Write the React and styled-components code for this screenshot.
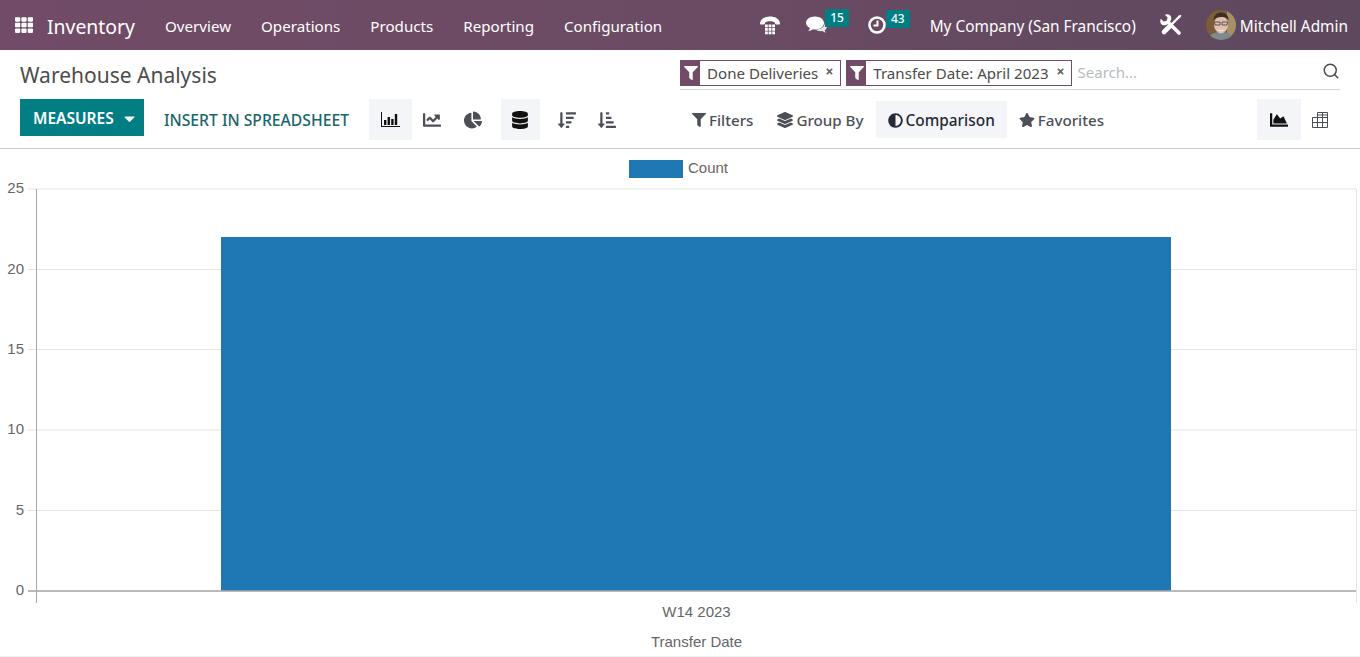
import React from "react";
import styled, { createGlobalStyle } from "styled-components";
import {
  FaAdjust,
  FaCaretDown,
  FaChartArea,
  FaChartLine,
  FaChartPie,
  FaDatabase,
  FaFilter,
  FaLayerGroup,
  FaSortAmountDown,
  FaSortAmountDownAlt,
  FaStar,
  FaTh,
  FaTimes,
} from "react-icons/fa";
import { Search } from "lucide-react";

const GlobalStyle = createGlobalStyle`
  html, body {
    margin: 0;
    height: 100%;
    overflow: hidden;
    background: #fff;
  }
  body {
    font-family: "Noto Sans", "Open Sans", sans-serif;
    color: #4c4c4c;
  }
`;

const Page = styled.div`
  width: 1360px;
  height: 657px;
  display: flex;
  flex-direction: column;
  overflow: hidden;
`;

const NavBar = styled.header`
  height: 50px;
  flex: none;
  display: flex;
  align-items: center;
  justify-content: space-between;
  color: #fff;
  background: linear-gradient(90deg, #714b67 0%, #6b4b64 50%, #5e485e 100%);
`;

const NavGroup = styled.nav`
  display: flex;
  align-items: center;
`;

const AppsButton = styled.span`
  display: flex;
  font-size: 18px;
  margin-left: 15px;
  margin-right: 14px;
`;

const Brand = styled.span`
  font-size: 19.4px;
  margin-right: 15px;
  margin-top: 2px;
  width: 88px;
`;

const MenuItem = styled.span`
  font-size: 15.15px;
  padding: 2px 15px 0;
  white-space: nowrap;
`;

const SystrayIcon = styled.span`
  display: flex;
  align-items: center;
  margin-right: ${(p) => p.$gap || 0}px;
`;

const BadgeGroup = styled.span`
  display: flex;
  align-items: flex-start;
  margin-right: ${(p) => p.$gap}px;
`;

const Badge = styled.span`
  background: #017e84;
  font-size: 12px;
  font-weight: 500;
  line-height: 18px;
  height: 18px;
  padding: 0 5px;
  margin-top: -6px;
  margin-left: ${(p) => p.$offset}px;
`;

const CompanyName = styled.span`
  font-size: 15.4px;
  margin-top: 2px;
  margin-right: 24px;
  white-space: nowrap;
`;

const UserName = styled.span`
  font-size: 15.4px;
  margin-top: 2px;
  margin-left: 4px;
  margin-right: 12px;
  white-space: nowrap;
`;

const ControlPanel = styled.section`
  height: 98px;
  flex: none;
  display: grid;
  grid-template-columns: 680px 680px;
  grid-template-rows: 49px 49px;
  border-bottom: 1px solid #ccc;
`;

const Title = styled.h1`
  margin: 0;
  padding: 11px 0 0 20px;
  font-size: 21px;
  line-height: 28px;
  font-weight: 400;
  color: #4c4c4c;
`;

const SearchBar = styled.div`
  width: 660px;
  height: 40px;
  display: flex;
  align-items: center;
  gap: 5px;
  padding-top: 7px;
  box-sizing: border-box;
  border-bottom: 1px solid #d5d5d5;
`;

const Facet = styled.div`
  display: flex;
  align-items: stretch;
  height: 26px;
  box-sizing: border-box;
  border: 1px solid #714b67;
  font-size: 15.1px;
  line-height: 25px;
  color: #4c4c4c;
`;

const FacetIcon = styled.span`
  width: 19px;
  background: #714b67;
  color: #fff;
  display: flex;
  align-items: center;
  justify-content: center;
  font-size: 14px;
`;

const FacetLabel = styled.span`
  padding-left: 7px;
  white-space: nowrap;
`;

const FacetRemove = styled.span`
  display: flex;
  padding: 6px 6px 0 7px;
  font-size: 9px;
  color: #666;
`;

const SearchInput = styled.span`
  flex: 1;
  padding-left: 1px;
  margin-top: -2px;
  font-size: 15px;
  color: #b8bcc0;
`;

const SearchIcon = styled.span`
  display: flex;
  color: #4c4c4c;
  margin-top: -5px;
`;

const ActionRow = styled.div`
  display: flex;
  align-items: flex-start;
  padding-left: ${(p) => p.$inset || 0}px;
`;

const PrimaryButton = styled.button`
  width: 124px;
  height: 37px;
  border: 0;
  padding: 1px 0 0 13px;
  background: #017e84;
  color: #fff;
  font-family: inherit;
  font-size: 15.5px;
  font-weight: 600;
  display: flex;
  align-items: center;
  justify-content: flex-start;
  gap: 7px;
  margin-right: 20px;
  svg {
    font-size: 17px;
  }
`;

const LinkButton = styled.span`
  font-size: 15.7px;
  font-weight: 500;
  line-height: 43px;
  color: #1b666b;
  margin-right: 20px;
  white-space: nowrap;
`;

const IconButton = styled.span`
  width: ${(p) => p.$width}px;
  height: 41px;
  margin-left: ${(p) => p.$gap || 0}px;
  display: flex;
  align-items: center;
  justify-content: center;
  font-size: ${(p) => p.$size || 18}px;
  background: ${(p) => (p.$active ? "#f4f5f9" : "transparent")};
  color: ${(p) => (p.$active ? "#111" : "#4c4f57")};
`;

const MenuButton = styled.span`
  height: 37px;
  box-sizing: border-box;
  margin-top: 2px;
  display: flex;
  align-items: center;
  gap: 3px;
  padding: 1px 12px 0;
  font-size: ${(p) => (p.$active ? 15.4 : 15.15)}px;
  font-weight: 500;
  white-space: nowrap;
  color: #4c4f57;
  background: ${(p) => (p.$active ? "#f4f5f9" : "transparent")};
  ${(p) => p.$active && "color: #262a36;"}
`;

const MenuGlyph = styled.span`
  display: flex;
  font-size: ${(p) => p.$size || 14}px;
`;

const ViewSwitcher = styled.div`
  display: flex;
  margin-left: auto;
  margin-right: 21px;
`;

const ChartArea = styled.main`
  flex: 1;
  min-height: 0;
  padding-top: 1px;
  border-bottom: 1px solid #f0f0f4;
  svg {
    display: block;
  }
`;

const ChartLabel = styled.text`
  font-family: "Liberation Sans", Arial, sans-serif;
  font-size: 15px;
  fill: #666;
`;

const TICKS = [
  { label: "25", y: 39 },
  { label: "20", y: 119.5 },
  { label: "15", y: 199.5 },
  { label: "10", y: 280 },
  { label: "5", y: 360.5 },
  { label: "0", y: 441 },
];

const BarChartIcon = () => (
  <svg width="19" height="15" viewBox="0 0 19 15" fill="#111">
    <path d="M0 0h1v14h18v1H0z" />
    <rect x="3" y="8" width="2.4" height="5" />
    <rect x="6.6" y="5" width="2.4" height="8" />
    <rect x="10.2" y="7" width="2.4" height="6" />
    <rect x="13.8" y="2" width="2.4" height="11" />
  </svg>
);

const PhoneIcon = () => (
  <svg width="20" height="20" viewBox="0 0 20 20" fill="#fff">
    <path d="M0 8C1 3.500 5 1.500 10 1.500S19 3.500 20 8c0 1-.4 1.500-1.200 1.500h-2.600c-.8 0-1.200-.5-1.200-1.200V7.500c-1.500-1-3-1.300-5-1.300s-3.500.3-5 1.300v.8c0 .7-.4 1.200-1.200 1.200H1.200C.4 9.500 0 9 0 8z" />
    {[5, 8.600, 12.200].map((x) =>
      [9.500, 13, 16.500].map((y) => (
        <rect key={`${x}-${y}`} x={x} y={y} width="2.800" height="2.800" />
      ))
    )}
  </svg>
);

const ChatIcon = () => (
  <svg width="21" height="20" viewBox="0 0 21 20" fill="#fff">
    <path d="M9 1.500c5 0 9 2.800 9 6.500s-4 6.500-9 6.500c-.8 0-1.600-.1-2.300-.2-1.200 1-2.600 1.600-4.400 1.800.8-.9 1.400-1.900 1.600-3C1.500 11.900 0 10 0 8c0-3.700 4-6.500 9-6.500z" />
    <path d="M18.800 7.500c1.400 1 2.200 2.400 2.200 3.900 0 1.500-.9 2.900-2.300 3.800.2.900.7 1.800 1.300 2.500-1.500-.2-2.700-.7-3.700-1.600-2.500.3-5.300-.3-7-1.600 4.500.3 9.800-2.200 9.500-7z" opacity=".85" />
  </svg>
);

const ClockIcon = () => (
  <svg width="18" height="18" viewBox="0 0 18 18" fill="none" stroke="#fff">
    <circle cx="9" cy="9" r="7.500" strokeWidth="2.600" />
    <path d="M9.500 4.500v5H5.500" strokeWidth="2" />
  </svg>
);

const ToolsIcon = () => (
  <svg width="22" height="22" viewBox="0 0 22 22" fill="#fff" stroke="#fff">
    <path d="M.8 4.800 3.600 7.600 6.800 6.800 7.600 3.600 4.800.8C7-.2 9.300.3 10.400 1.700 11.400 3 11.600 4.600 11 6L8.500 9.700 6 11C4.500 11.600 3 11.400 1.700 10.400.3 9.300-.2 7 .8 4.800z" stroke="none" />
    <path d="M8 8l11 11" strokeWidth="3.600" strokeLinecap="round" fill="none" />
    <path d="M19.600 2.400 11 11" strokeWidth="2.200" fill="none" />
    <path d="M20.400 .8 21.400 1.800 19.800 4.200 17.900 2.300z" stroke="none" />
    <path d="M10 12 4 18" strokeWidth="4.600" strokeLinecap="round" fill="none" />
  </svg>
);

const GridIcon = () => (
  <svg width="16" height="16" viewBox="0 0 16 16" fill="none" stroke="#4c4f57" strokeWidth="1">
    <path d="M5.500 5.500V.500h10v15H.500v-10h15M.5 10.500h15M5.500 5.500v10M10.500 .5v15M5.500 3h10" />
  </svg>
);

const Avatar = () => (
  <svg width="30" height="30" viewBox="0 0 30 30">
    <defs>
      <clipPath id="avatar-clip">
        <circle cx="15" cy="15" r="15" />
      </clipPath>
      <filter id="avatar-soft">
        <feGaussianBlur stdDeviation=".5" />
      </filter>
    </defs>
    <g clipPath="url(#avatar-clip)">
      <rect width="30" height="30" fill="#7d5c38" />
      <rect x="21" width="9" height="30" fill="#a88f68" />
      <g filter="url(#avatar-soft)">
        <path d="M3 30c0-6 5-8 12-8s12 2 12 8z" fill="#7f8a90" />
        <ellipse cx="15" cy="14.500" rx="7" ry="9" fill="#e0bfae" />
        <path d="M7.500 11c0-6 4-8.500 8-8.500s7.500 3 7 8.500c-1-3-3-4-7-4s-6.500 1-8 4z" fill="#3c2f28" />
        <path d="M8.500 12h5.500v3H9zM16 12h5.500l-.5 3h-5z" fill="none" stroke="#3a3a3a" strokeWidth=".8" />
        <path d="M11 19c2 2 6 2 8 0-1 3-7 3-8 0z" fill="#fff" />
      </g>
    </g>
  </svg>
);

const Chart = () => (
  <svg width="1360" height="506" viewBox="0 0 1360 506">
    <rect x="629" y="10" width="54" height="18" fill="#1f77b4" />
    <ChartLabel x="688" y="23">Count</ChartLabel>
    {TICKS.map((t) => (
      <g key={t.label}>
        <line x1="28" x2="1356" y1={t.y} y2={t.y} stroke="#e4e4e4" />
        <ChartLabel x="24" y={t.y + 4} textAnchor="end">{t.label}</ChartLabel>
      </g>
    ))}
    <line x1="1356.500" x2="1356.500" y1="39" y2="453" stroke="#e4e4e4" />
    <rect x="221" y="87" width="950" height="354" fill="#1f77b4" />
    <line x1="36.500" x2="36.500" y1="39" y2="453" stroke="#a8a8a8" />
    <line x1="28" x2="1356" y1="441" y2="441" stroke="#a8a8a8" strokeWidth="1.500" />
    <ChartLabel x="696.500" y="467" textAnchor="middle">W14 2023</ChartLabel>
    <ChartLabel x="696.500" y="497" textAnchor="middle">Transfer Date</ChartLabel>
  </svg>
);

export default function App() {
  return (
    <Page>
      <GlobalStyle />
      <NavBar>
        <NavGroup>
          <AppsButton><FaTh /></AppsButton>
          <Brand>Inventory</Brand>
          <MenuItem>Overview</MenuItem>
          <MenuItem>Operations</MenuItem>
          <MenuItem>Products</MenuItem>
          <MenuItem>Reporting</MenuItem>
          <MenuItem>Configuration</MenuItem>
        </NavGroup>
        <NavGroup>
          <SystrayIcon $gap={26}><PhoneIcon /></SystrayIcon>
          <BadgeGroup $gap={19}>
            <SystrayIcon><ChatIcon /></SystrayIcon>
            <Badge $offset={-2}>15</Badge>
          </BadgeGroup>
          <BadgeGroup $gap={20}>
            <SystrayIcon><ClockIcon /></SystrayIcon>
            <Badge $offset={0}>43</Badge>
          </BadgeGroup>
          <CompanyName>My Company (San Francisco)</CompanyName>
          <SystrayIcon $gap={24}><ToolsIcon /></SystrayIcon>
          <Avatar />
          <UserName>Mitchell Admin</UserName>
        </NavGroup>
      </NavBar>
      <ControlPanel>
        <Title>Warehouse Analysis</Title>
        <SearchBar>
          <Facet>
            <FacetIcon><FaFilter /></FacetIcon>
            <FacetLabel>Done Deliveries</FacetLabel>
            <FacetRemove><FaTimes /></FacetRemove>
          </Facet>
          <Facet>
            <FacetIcon><FaFilter /></FacetIcon>
            <FacetLabel>Transfer Date: April 2023</FacetLabel>
            <FacetRemove><FaTimes /></FacetRemove>
          </Facet>
          <SearchInput>Search...</SearchInput>
          <SearchIcon><Search size={18} strokeWidth={2} /></SearchIcon>
        </SearchBar>
        <ActionRow $inset={20}>
          <PrimaryButton>MEASURES <FaCaretDown /></PrimaryButton>
          <LinkButton>INSERT IN SPREADSHEET</LinkButton>
          <IconButton $width={43} $active><BarChartIcon /></IconButton>
          <IconButton $width={41}><FaChartLine /></IconButton>
          <IconButton $width={41}><FaChartPie /></IconButton>
          <IconButton $width={39} $gap={7} $active><FaDatabase /></IconButton>
          <IconButton $width={40} $gap={7}><FaSortAmountDown /></IconButton>
          <IconButton $width={40}><FaSortAmountDownAlt /></IconButton>
        </ActionRow>
        <ActionRow>
          <MenuButton>
            <MenuGlyph><FaFilter /></MenuGlyph>Filters
          </MenuButton>
          <MenuButton>
            <MenuGlyph $size={16}><FaLayerGroup /></MenuGlyph>Group By
          </MenuButton>
          <MenuButton $active>
            <MenuGlyph $size={15}><FaAdjust /></MenuGlyph>Comparison
          </MenuButton>
          <MenuButton>
            <MenuGlyph $size={16}><FaStar /></MenuGlyph>Favorites
          </MenuButton>
          <ViewSwitcher>
            <IconButton $width={44} $active><FaChartArea /></IconButton>
            <IconButton $width={38}><GridIcon /></IconButton>
          </ViewSwitcher>
        </ActionRow>
      </ControlPanel>
      <ChartArea>
        <Chart />
      </ChartArea>
    </Page>
  );
}
